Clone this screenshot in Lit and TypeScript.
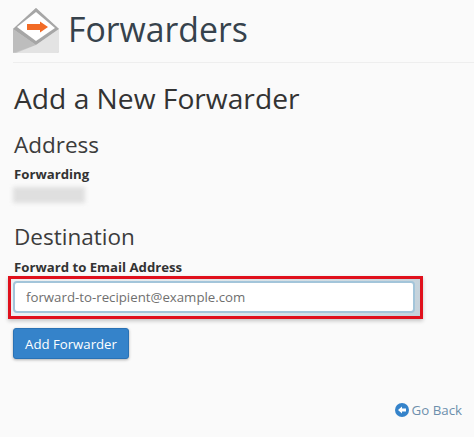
import { LitElement, html, css } from "lit";
import { customElement } from "lit/decorators.js";

@customElement("app-root")
export class AppRoot extends LitElement {
  static styles = css`
    :host { display: block; width: 474px; height: 437px; background: #fafafa; overflow: hidden; font-family: "Open Sans", sans-serif; color: #333; position: relative; box-sizing: border-box; }
    .page { display: flex; flex-direction: column; padding: 8px 12px 0 13px; height: 100%; box-sizing: border-box; }
    .head { display: flex; align-items: flex-start; gap: 9px; height: 46px; padding-bottom: 8px; border-bottom: 1px solid #eeeeee; margin-right: -12px; flex: none; }
    .logo { width: 46px; height: 46px; flex: none; }
    h1 { margin: 1px 0 0; font-size: 33.8px; font-weight: 400; line-height: 40px; color: #36424c; }
    h2 { margin: 16px 0 0 1px; font-size: 28.2px; font-weight: 400; line-height: 38px; color: #333; }
    h3 { margin: 0 0 0 1px; font-size: 22.5px; font-weight: 400; line-height: 30px; color: #3c3c3c; }
    .addr { margin-top: 13px; }
    .dest { margin-top: 19px; }
    label { display: block; margin: 5px 0 0 1px; font-size: 13.2px; font-weight: 700; line-height: 18px; color: #333; }
    .dest + label { margin-top: 6px; }
    .blur { width: 72px; height: 16px; margin-top: 4px; background: #dfdfdf; filter: blur(2px); }
    .field { position: relative; margin-top: 5px; }
    input { position: relative; z-index: 1; display: block; box-sizing: border-box; width: 402px; height: 32px; padding: 0 11px; border: 2px solid #a3c5da; border-radius: 4px; background: #fff; font: 400 13.25px "Open Sans", sans-serif; color: #666; outline: none; }
    input::placeholder { color: #6f6f6f; opacity: 1; }
    .mark { position: absolute; left: -5px; top: -5px; width: 415px; height: 43px; box-sizing: border-box; border: 3px solid #e0101c; background: linear-gradient(to right, #eef0f2, #dfe6ea 50%, #c5d3dc); box-shadow: 0 2px 4px rgba(0,0,0,.22); pointer-events: none; }
    button { align-self: flex-start; margin-top: 15px; width: 116px; height: 31px; border: 1px solid #2a72b5; border-radius: 3px; background: #3583ca; color: #fff; font: 400 13.2px "Open Sans", sans-serif; box-shadow: 0 1px 3px rgba(0,0,0,.3); padding: 0; }
    .back { margin-top: 42px; align-self: flex-end; display: flex; align-items: center; gap: 3px; font-size: 13.3px; line-height: 18px; color: #6d8fac; }
    .back svg { width: 14px; height: 14px; }
  `;

  render() {
    return html`
      <div class="page">
        <div class="head">
          <svg class="logo" viewBox="0 0 46 46">
            <path d="M0 21 L23 0 L46 21 L46 43 Q46 45 44 45 L2 45 Q0 45 0 43 Z" fill="#c9c9c9"/>
            <path d="M0 21 L23 0 L46 21 L23 37 Z" fill="#a6a6a6"/>
            <path d="M4 19 L23 4 L42 20 L23 33 Z" fill="#ffffff"/>
            <path d="M0 21 L23 37 L0 45 Z" fill="#bdbdbd"/>
            <path d="M46 21 L23 37 L3 45 L44 45 Q46 45 46 43 Z" fill="#e3e3e3"/>
            <path d="M14 16 H27 V13.500 L35 19 L27 24.500 V22 H14 Z" fill="#f26b26"/>
          </svg>
          <h1>Forwarders</h1>
        </div>
        <h2>Add a New Forwarder</h2>
        <h3 class="addr">Address</h3>
        <label>Forwarding</label>
        <div class="blur"></div>
        <h3 class="dest">Destination</h3>
        <label>Forward to Email Address</label>
        <div class="field">
          <input placeholder="forward-to-recipient@example.com" />
          <div class="mark"></div>
        </div>
        <button>Add Forwarder</button>
        <div class="back">
          <svg viewBox="0 0 14 14"><circle cx="7" cy="7" r="7" fill="#3583ca"/><path d="M3 7 L7 3.500 V5.500 H11 V8.500 H7 V10.500 Z" fill="#fff"/></svg>
          <span>Go Back</span>
        </div>
      </div>
    `;
  }
}
